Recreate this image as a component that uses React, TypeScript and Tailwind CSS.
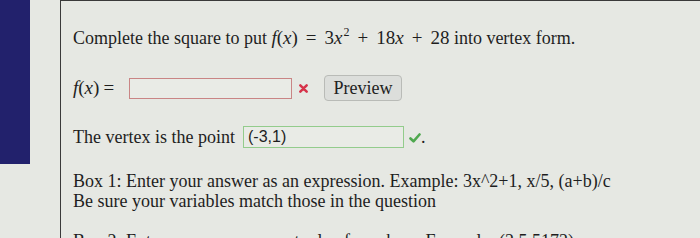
import React from 'react';

function MathExpr() {
  return (
    <span className="font-['Liberation_Serif',serif] text-[19px]">
      <i>f</i>(<i>x</i>)<span className="mx-[8px]">=</span>3<i>x</i>
      <sup className="text-[12px] -top-[8px] ml-[1px]">2</sup>
      <span className="mx-[8px]">+</span>18<i>x</i>
      <span className="mx-[8px]">+</span>28
    </span>
  );
}

function WrongMark() {
  return (
    <svg width="9" height="9" viewBox="0 0 10 10" className="shrink-0">
      <path d="M1.5 1.5 L8.5 8.5 M8.5 1.5 L1.5 8.5" stroke="#d6334a" strokeWidth="2.8" strokeLinecap="round" />
    </svg>
  );
}

function CheckMark() {
  return (
    <svg width="12" height="10" viewBox="0 0 12 10" className="shrink-0">
      <path d="M1.5 5.5 L4.5 8.3 L10.5 1.5" fill="none" stroke="#4fa84f" strokeWidth="2.6" strokeLinecap="round" strokeLinejoin="round" />
    </svg>
  );
}

export default function App() {
  return (
    <div className="w-[700px] h-[238px] overflow-hidden flex bg-[#e6e8e3] text-[#1e1e1e] font-['Liberation_Serif',serif]">
      <div className="w-[30px] h-[164px] shrink-0 bg-[#22216c]" />
      <div className="ml-[30px] flex-1 flex flex-col min-w-0">
        <div className="h-[16px] overflow-hidden pl-[283px]">
          <span className="block text-[14px] leading-none -mt-[8px] text-[#444]">1</span>
        </div>
        <div className="flex-1 border-l border-t border-[#3a3a3a] pl-[12px] pt-[25px]">
          <p className="text-[18px] leading-[24px] whitespace-nowrap">
            Complete the square to put <MathExpr /> into vertex form.
          </p>

          <div className="mt-[25px] h-[26px] flex items-center">
            <span className="text-[19px] w-[56px]">
              <i>f</i>(<i>x</i>)<span className="ml-[4px]">=</span>
            </span>
            <div className="w-[163px] h-[21px] border border-[#c98585] bg-[#e9ebe6]" />
            <span className="ml-[7px]">
              <WrongMark />
            </span>
            <button className="ml-[16px] w-[78px] h-[26px] rounded-[4px] border border-[#b9bbb7] bg-[#dcdedb] text-[18px] leading-none text-[#222]">
              Preview
            </button>
          </div>

          <div className="mt-[25px] h-[22px] flex items-center">
            <span className="text-[18px] w-[170px] whitespace-nowrap">The vertex is the point</span>
            <div className="w-[161px] h-[22px] border border-[#93cc8c] bg-[#e9ebe6] flex items-center px-[4px] font-['Liberation_Sans',sans-serif] text-[16px]">
              (-3,1)
            </div>
            <span className="ml-[5px] mt-[2px]">
              <CheckMark />
            </span>
            <span className="text-[18px]">.</span>
          </div>

          <div className="mt-[23px] text-[18px] leading-[20px] whitespace-nowrap">
            <p>Box 1: Enter your answer as an expression. Example: 3x^2+1, x/5, (a+b)/c</p>
            <p>Be sure your variables match those in the question</p>
            <p className="mt-[20px]">Box 2: Enter your answer as a tuple of numbers. Example: (2,5,5172)</p>
          </div>
        </div>
      </div>
    </div>
  );
}
